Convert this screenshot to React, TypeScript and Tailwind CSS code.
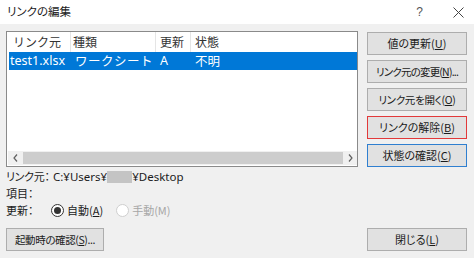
import React from "react";

const jp = "font-['Noto_Sans_CJK_JP',sans-serif]";
const palt = "[font-feature-settings:'palt']";

const Key: React.FC<{ k: string }> = ({ k }) => (
    <>
        (<span className="underline underline-offset-1">{k}</span>)
    </>
);

interface BtnProps {
    children: React.ReactNode;
    tone?: "normal" | "red" | "blue";
    className?: string;
    textClass?: string;
}

const Btn: React.FC<BtnProps> = ({ children, tone = "normal", className = "", textClass = "text-[11px]" }) => {
    const border =
        tone === "red"
            ? "border-[1.5px] border-[#e2393a]"
            : tone === "blue"
            ? "border-[1.5px] border-[#2f7fd0]"
            : "border border-[#adadad]";
    return (
        <div
            className={`h-[23px] flex items-center justify-center bg-[#e1e1e1] whitespace-nowrap text-[#1b1b1b] ${palt} ${border} ${className}`}
        >
            <span className={textClass}>{children}</span>
        </div>
    );
};

const Radio: React.FC<{ checked?: boolean; disabled?: boolean }> = ({ checked, disabled }) => (
    <span
        className={`w-[13px] h-[13px] rounded-full border flex items-center justify-center bg-white ${
            disabled ? "border-[#cfcfcf]" : "border-[#333333]"
        }`}
    >
        {checked && <span className="w-[7px] h-[7px] rounded-full bg-[#333333]" />}
    </span>
);

export default function App() {
    return (
        <div className={`w-[474px] h-[258px] bg-[#f0f0f0] flex flex-col ${jp} text-[#1b1b1b] select-none`}>
            {/* title bar */}
            <div className="h-[24px] bg-white flex items-center pl-[7px] pr-[10px]">
                <span className={`text-[11.5px] ${palt}`}>リンクの編集</span>
                <span className="ml-auto mr-[30px] text-[12px] text-[#555] font-['Liberation_Sans',sans-serif]">?</span>
                <svg width="11" height="11" viewBox="0 0 11 11">
                    <path d="M0.5 0.5 L10.5 10.5 M10.5 0.5 L0.5 10.5" stroke="#444" strokeWidth="1" />
                </svg>
            </div>

            <div className="flex-1 flex gap-[9px] pl-[6px] pt-[7px] pb-[7px]">
                {/* left side */}
                <div className="w-[352px] flex flex-col">
                    <div className="h-[136px] border border-[#8a8a8a] bg-white flex flex-col pl-[2px]">
                        <div className="grid grid-cols-[62px_85px_35px_1fr] h-[20px] text-[12px] text-[#333]">
                            <div className="pl-[4px] flex items-center border-r border-[#e5e5e5]">リンク元</div>
                            <div className="pl-[2px] flex items-center border-r border-[#e5e5e5]">種類</div>
                            <div className="pl-[4px] flex items-center border-r border-[#e5e5e5]">更新</div>
                            <div className="pl-[4px] flex items-center">状態</div>
                        </div>
                        <div className="grid grid-cols-[62px_85px_35px_1fr] h-[18px] bg-[#0078d7] text-white text-[12.5px]">
                            <div className="pl-[1px] flex items-center font-['Noto_Sans',sans-serif]">test1.xlsx</div>
                            <div className="pl-[4px] flex items-center tracking-[0.5px]">ワークシート</div>
                            <div className="pl-[4px] flex items-center font-['Noto_Sans',sans-serif]">A</div>
                            <div className="pl-[4px] flex items-center">不明</div>
                        </div>
                        <div className="mt-auto h-[14px] mb-[1px] -ml-[1px] bg-[#f0f0f0] flex items-center">
                            <div className="w-[15px] flex justify-center">
                                <svg width="5" height="8" viewBox="0 0 5 8">
                                    <path d="M4 0.5 L1 4 L4 7.5" stroke="#606060" strokeWidth="1.2" fill="none" />
                                </svg>
                            </div>
                            <div className="h-[12px] w-[320px] bg-[#cdcdcd]" />
                            <div className="flex-1 flex justify-center">
                                <svg width="5" height="8" viewBox="0 0 5 8">
                                    <path d="M1 0.5 L4 4 L1 7.5" stroke="#606060" strokeWidth="1.2" fill="none" />
                                </svg>
                            </div>
                        </div>
                    </div>

                    <div className={`text-[11px] ${palt} grid grid-cols-[47px_1fr] mt-[1px] whitespace-nowrap`}>
                        <div className="h-[17px] flex items-center tracking-[-0.3px]">リンク元：</div>
                        <div className="h-[17px] flex items-center font-['Noto_Sans',sans-serif] text-[11.5px]">
                            C:¥Users¥
                            <span className="inline-block w-[25px] h-[12px] bg-[#c4c4c4]" />
                            ¥Desktop
                        </div>
                        <div className="h-[17px] flex items-center">項目：</div>
                        <div className="h-[17px]" />
                        <div className="h-[17px] flex items-center">更新：</div>
                        <div className="h-[17px] flex items-center -ml-[2px]">
                            <Radio checked />
                            <span className="ml-[3px]">
                                自動<Key k="A" />
                            </span>
                            <span className="ml-[13px]">
                                <Radio disabled />
                            </span>
                            <span className="ml-[3px] text-[#a6a6a6]">手動(M)</span>
                        </div>
                    </div>

                    <Btn className="mt-auto w-[98px]" textClass="text-[10.5px] tracking-[-0.4px]">
                        起動時の確認<Key k="S" />...
                    </Btn>
                </div>

                {/* right side */}
                <div className="w-[100px] flex flex-col gap-[5px] pt-[1px]">
                    <Btn>
                        値の更新<Key k="U" />
                    </Btn>
                    <Btn textClass="text-[10.5px] tracking-[-0.8px]">
                        リンク元の変更<Key k="N" />...
                    </Btn>
                    <Btn textClass="text-[10.5px] tracking-[-0.3px]">
                        リンク元を開く<Key k="O" />
                    </Btn>
                    <Btn tone="red">
                        リンクの解除<Key k="B" />
                    </Btn>
                    <Btn tone="blue">
                        状態の確認<Key k="C" />
                    </Btn>
                    <Btn className="mt-auto">
                        閉じる<Key k="L" />
                    </Btn>
                </div>
            </div>
        </div>
    );
}
